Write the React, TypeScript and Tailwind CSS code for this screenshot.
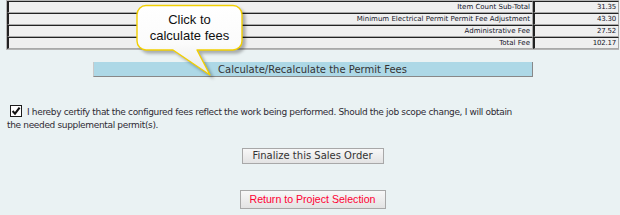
import React from "react";

const fees = [
  { label: "Item Count Sub-Total", value: "31.35" },
  { label: "Minimum Electrical Permit Permit Fee Adjustment", value: "43.30" },
  { label: "Administrative Fee", value: "27.52" },
  { label: "Total Fee", value: "102.17" },
];

function Callout() {
  return (
    <div className="absolute left-[130px] top-0 w-[125px] h-[80px] pointer-events-none">
      <svg
        width="125"
        height="80"
        viewBox="0 0 125 80"
        className="absolute inset-0 drop-shadow-[3px_3px_1.5px_rgba(0,0,0,0.28)]"
      >
        <defs>
          <linearGradient id="bubble" x1="0" y1="0" x2="0" y2="1">
            <stop offset="0" stopColor="#ffffff" />
            <stop offset="0.55" stopColor="#fbfbfb" />
            <stop offset="1" stopColor="#e9e9e9" />
          </linearGradient>
        </defs>
        <path
          d="M16 5.5 H103 A9 9 0 0 1 112 14.5 V41 A9 9 0 0 1 103 50 H67 L80 75 L43 50 H16 A9 9 0 0 1 7 41 V14.5 A9 9 0 0 1 16 5.5 Z"
          fill="url(#bubble)"
          stroke="#f2cf00"
          strokeWidth="1.4"
          strokeLinejoin="round"
        />
      </svg>
      <div className="absolute left-[7px] top-[5px] w-[105px] h-[45px] flex items-center justify-center text-center font-['Liberation_Sans',Arial,sans-serif] text-[13px] leading-[16px] text-[#111]">
        Click to
        <br />
        calculate fees
      </div>
    </div>
  );
}

function CheckMark() {
  return (
    <span className="relative inline-block w-[12px] h-[12px] ml-[3px] mr-[5px] align-[-2px]">
      <input
        type="checkbox"
        defaultChecked
        className="appearance-none block w-[12px] h-[12px] m-0 border border-[#1c1c1c] bg-white"
      />
      <svg viewBox="0 0 12 12" className="absolute inset-0 w-[12px] h-[12px] pointer-events-none">
        <path d="M2.6 6 L5 8.6 L9.6 2.6" fill="none" stroke="#111" strokeWidth="2.1" />
      </svg>
    </span>
  );
}

export default function App() {
  return (
    <div className="relative w-[620px] min-h-[215px] bg-[#eaf2f3] font-['DejaVu_Sans',Verdana,sans-serif] text-[#333]">
      <div className="ml-[6px] mr-[1px]">
        <table className="w-full border-separate border-spacing-0 border-l border-t border-b border-[#b5b5b5]">
          <tbody>
            {fees.map((f) => (
              <tr key={f.label}>
                <td className="p-0 bg-[#efefef] border-t border-l-2 border-b border-r border-t-[#222] border-l-[#222] border-b-[#a9a9a9] border-r-[#a9a9a9]">
                  <div className="h-[10px] pr-[2px] text-right text-[7px] leading-[10px] text-[#14152a]">
                    {f.label}
                  </div>
                </td>
                <td className="p-0 w-[86px] bg-[#efefef] border-t border-l-2 border-b border-r border-t-[#222] border-l-[#222] border-b-[#a9a9a9] border-r-[#a9a9a9]">
                  <div className="h-[10px] pr-[2px] text-right text-[7px] leading-[10px] tracking-[-0.2px] text-[#14152a]">
                    {f.value}
                  </div>
                </td>
              </tr>
            ))}
          </tbody>
        </table>

        <button
          type="button"
          className="block mx-auto mt-[12px] w-[440px] h-[15px] p-0 bg-[#add8e6] border-l border-l-[#c9c9c9] border-r border-b border-r-[#888] border-b-[#888] text-[10px] leading-[13px] text-[#333]"
        >
          Calculate/Recalculate the Permit Fees
        </button>

        <p className="mt-[28px] w-[516px] pl-[1px] text-[9px] leading-[13px] tracking-[-0.34px] text-[#2e2a33]">
          <CheckMark />I hereby certify that the configured fees reflect the work being performed. Should the job scope
          change, I will obtain the needed supplemental permit(s).
        </p>

        <button
          type="button"
          className="block mx-auto mt-[16px] w-[142px] h-[16px] p-0 border border-[#a8a8a8] bg-linear-to-b from-[#f8f8f8] to-[#e3e3e3] text-[10px] leading-[14px] text-[#333]"
        >
          Finalize this Sales Order
        </button>

        <button
          type="button"
          className="block mx-auto mt-[26px] w-[146px] h-[19px] p-0 border border-[#a8a8a8] bg-linear-to-b from-[#f8f8f8] to-[#e3e3e3] font-['Liberation_Sans',Arial,sans-serif] text-[10.6px] leading-[17px] text-[#ff0033]"
        >
          Return to Project Selection
        </button>
      </div>

      <Callout />
    </div>
  );
}
